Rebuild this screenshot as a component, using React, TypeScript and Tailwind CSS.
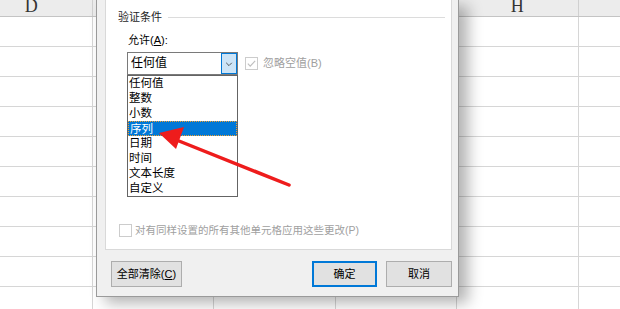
import React from 'react';

const COLS = ['D', 'E', 'F', 'G', 'H', 'I'];
const ROWS = 10;
const OPTIONS = ['任何值', '整数', '小数', '序列', '日期', '时间', '文本长度', '自定义'];
const FONT = { fontFamily: '"Liberation Sans", "Noto Sans CJK SC", sans-serif' };

function Sheet() {
  return (
    <div className="ml-[-29px] flex flex-col">
      <div className="flex h-[17px] border-b border-[#c4c4c4] bg-[#ececec]">
        {COLS.map((c) => (
          <div key={c} className="flex w-[121.5px] shrink-0 justify-center overflow-hidden border-r border-[#d0d0d0]">
            <span className="mt-[-3px] block text-[18px] leading-[18px] text-[#333]" style={{ fontFamily: '"Liberation Serif", serif' }}>
              {c === 'D' || c === 'H' ? c : ''}
            </span>
          </div>
        ))}
      </div>
      {Array.from({ length: ROWS }).map((_, r) => (
        <div key={r} className="flex h-[30px] border-b border-[#d6d6d6] bg-white">
          {COLS.map((c) => (
            <div key={c} className="w-[121.5px] shrink-0 border-r border-[#d6d6d6]" />
          ))}
        </div>
      ))}
    </div>
  );
}

function Check({ disabled, checked }: { disabled?: boolean; checked?: boolean }) {
  return (
    <span className={`flex h-[13px] w-[13px] items-center justify-center border ${disabled ? 'border-[#cccccc] bg-white' : 'border-[#333]'}`}>
      {checked && (
        <svg viewBox="0 0 12 12" className="h-[11px] w-[11px]" fill="none" stroke="#bfbfbf" strokeWidth="1.3">
          <path d="M2 6.2l2.6 2.6L10 3.2" />
        </svg>
      )}
    </span>
  );
}

function Dialog() {
  return (
    <div
      className="absolute left-[96px] top-0 flex h-[297px] w-[363px] flex-col border-x border-b border-[#9a9a9a] bg-[#f0f0f0] pl-[8px] pr-[6px] shadow-[9px_6px_14px_rgba(0,0,0,0.3)]"
      style={FONT}
    >
      {/* tab panel */}
      <div className="flex h-[250px] flex-col border-x border-b border-[#d9d9d9] bg-white pl-[12px] text-[11px] text-black">
        <div className="mt-[9px] flex h-4 items-center gap-[6px] leading-4">
          <span className="text-[#1e1e1e]">验证条件</span>
          <span className="mr-[6px] h-px flex-1 bg-[#dcdcdc]" />
        </div>
        <div className="mt-[7px] h-4 pl-[10px] leading-4">允许(<span className="underline">A</span>):</div>
        <div className="mt-[4px] flex items-start pl-[9px]">
          <div className="relative flex h-[23px] w-[111px] border border-[#7a7a7a] bg-white">
            <span className="flex-1 pl-[3px] text-[12px] leading-[21px]">任何值</span>
            <span className="flex w-[16px] items-center justify-center border border-[#0078d7] bg-[#cce4f7]">
              <svg viewBox="0 0 10 10" className="h-[8px] w-[8px]" fill="none" stroke="#333" strokeWidth="1">
                <path d="M1.5 3.5L5 7l3.5-3.5" />
              </svg>
            </span>
            <div className="absolute left-[-1px] top-[22px] flex w-[111px] flex-col border border-[#646464] bg-white">
              {OPTIONS.map((o) => (
                <div
                  key={o}
                  className={`h-[15px] pl-[1px] text-[11.5px] leading-[15px] ${o === '序列' ? 'border border-dotted border-[#f0a030] bg-[#0078d7] pl-0 leading-[13px] text-white' : ''}`}
                >
                  {o}
                </div>
              ))}
            </div>
          </div>
          <div className="ml-[7px] mt-[3px] flex items-center gap-[5px] text-[#a0a0a0]">
            <Check disabled checked />
            <span className="leading-4">忽略空值(B)</span>
          </div>
        </div>
        <div className="mb-[11px] mt-auto flex items-center gap-[3px] pl-[1px] text-[10.5px] text-[#a0a0a0]">
          <Check disabled />
          <span className="leading-4">对有同样设置的所有其他单元格应用这些更改(P)</span>
        </div>
      </div>
      {/* buttons */}
      <div className="mt-[11px] flex items-start pl-[6px] text-[11px] text-black">
        <button type="button" className="h-[26px] w-[71px] border border-[#adadad] bg-[#e1e1e1]">全部清除(<span className="underline">C</span>)</button>
        <button type="button" className="ml-auto h-[26px] w-[65px] border-2 border-[#0078d7] bg-[#e1e1e1]">确定</button>
        <button type="button" className="ml-[9px] h-[26px] w-[66px] border border-[#adadad] bg-[#e1e1e1]">取消</button>
      </div>
    </div>
  );
}

export default function App() {
  return (
    <div className="relative h-[309px] w-[620px] overflow-hidden bg-white">
      <Sheet />
      <Dialog />
      <svg className="pointer-events-none absolute left-0 top-0" width="620" height="309" viewBox="0 0 620 309">
        <line x1="289" y1="185" x2="174" y2="139" stroke="#ee1c1c" strokeWidth="3.5" strokeLinecap="round" />
        <polygon points="159,133 184,127 176,149" fill="#ee1c1c" />
      </svg>
    </div>
  );
}
